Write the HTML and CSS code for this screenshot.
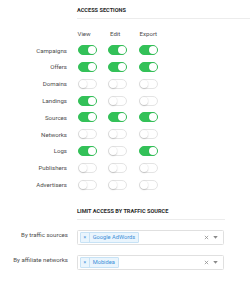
FILE: index.html
```html
<!DOCTYPE html>
<html>
<head>
<meta charset="utf-8">
<link rel="stylesheet" href="styles.css">
</head>
<body>
<div class="page">
  <section class="access">
    <div class="section-head">ACCESS SECTIONS</div>
    <div class="perm-grid">
      <div class="label"></div>
      <div class="col-head">View</div>
      <div class="col-head edit">Edit</div>
      <div class="col-head export">Export</div>

      <div class="label">Campaigns</div>
      <span class="tog on"></span><span class="tog on"></span><span class="tog on"></span>

      <div class="label">Offers</div>
      <span class="tog on"></span><span class="tog on"></span><span class="tog on"></span>

      <div class="label">Domains</div>
      <span class="tog"></span><span class="tog"></span><span class="tog"></span>

      <div class="label">Landings</div>
      <span class="tog on"></span><span class="tog"></span><span class="tog"></span>

      <div class="label">Sources</div>
      <span class="tog on"></span><span class="tog on"></span><span class="tog on"></span>

      <div class="label">Networks</div>
      <span class="tog"></span><span class="tog"></span><span class="tog"></span>

      <div class="label">Logs</div>
      <span class="tog on"></span><span class="tog"></span><span class="tog on"></span>

      <div class="label">Publishers</div>
      <span class="tog"></span><span class="tog"></span><span class="tog"></span>

      <div class="label">Advertisers</div>
      <span class="tog"></span><span class="tog"></span><span class="tog"></span>
    </div>
  </section>

  <section class="limit">
    <div class="section-head short">LIMIT ACCESS BY TRAFFIC SOURCE</div>
    <div class="field">
      <div class="flabel">By traffic sources</div>
      <div class="select">
        <span class="tag"><span class="tag-x">×</span><span class="tag-t">Google AdWords</span></span>
        <svg class="clear" viewBox="0 0 6 6" width="5" height="5"><path d="M1 1L5 5M5 1L1 5" stroke="#8a8a8a" stroke-width="0.9"/></svg>
        <svg class="arrow" viewBox="0 0 6 4" width="5" height="3"><path d="M0 0H6L3 3.5Z" fill="#8a8a8a"/></svg>
      </div>
    </div>
    <div class="field">
      <div class="flabel">By affiliate networks</div>
      <div class="select">
        <span class="tag"><span class="tag-x">×</span><span class="tag-t">Mobidea</span></span>
        <svg class="clear" viewBox="0 0 6 6" width="5" height="5"><path d="M1 1L5 5M5 1L1 5" stroke="#8a8a8a" stroke-width="0.9"/></svg>
        <svg class="arrow" viewBox="0 0 6 4" width="5" height="3"><path d="M0 0H6L3 3.5Z" fill="#8a8a8a"/></svg>
      </div>
    </div>
  </section>
</div>
</body>
</html>
```

FILE: styles.css
```css
* { box-sizing: border-box; }
html, body { margin: 0; padding: 0; background: #fff; }
body {
  font-family: Roboto, "Liberation Sans", Arial, sans-serif;
  font-size: 6.1px;
  color: #4d4d4d;
  width: 250px;
  height: 286px;
  overflow: hidden;
}
.page { padding-top: 7px; }

.section-head {
  margin-left: 77px;
  font-weight: bold;
  font-size: 5.6px;
  color: #2a2a2a;
  height: 12px;
  border-bottom: 1px solid #ececec;
  line-height: 6px;
}
.section-head.short { margin-right: 25px; }

.perm-grid {
  display: grid;
  grid-template-columns: 67px 20px 20px 20px;
  column-gap: 10.5px;
  grid-auto-rows: 16.8px;
  margin-top: 6px;
  align-items: center;
}
.perm-grid > .label { justify-self: end; }
.col-head.edit { padding-left: 2px; }
.col-head.export { padding-left: 1px; }

.tog {
  position: relative;
  display: block;
  width: 19px;
  height: 10px;
  border-radius: 5px;
  background: #fff;
  border: 1px solid #e4e4e4;
}
.tog::after {
  content: "";
  position: absolute;
  top: 0;
  left: 0;
  width: 8px;
  height: 8px;
  border-radius: 50%;
  background: #fff;
  box-shadow: 0 0.5px 1.5px rgba(0,0,0,0.28);
}
.tog.on { background: #33c158; border-color: #33c158; }
.tog.on::after { left: auto; right: 0; box-shadow: 0 0 1px rgba(0,0,0,0.15); }

.limit { margin-top: 15px; }
.limit .section-head { height: 12px; }

.field {
  display: grid;
  grid-template-columns: 68px 147px;
  column-gap: 9px;
  margin-top: 10px;
}
.field + .field { margin-top: 10px; }
.flabel { text-align: right; padding-top: 1.5px; }
.select {
  height: 15px;
  border: 1px solid #e0e0e0;
  border-radius: 1.5px;
  display: flex;
  align-items: center;
  padding: 0 5px 0 2px;
}
.tag {
  display: flex;
  align-items: center;
  height: 11px;
  background: #eaf5fd;
  border: 1px solid #c7e2f5;
  border-radius: 1px;
  color: #3d8fd8;
  font-size: 5.7px;
}
.tag-x {
  padding: 0 2.5px;
  border-right: 1px solid #c7e2f5;
  height: 100%;
  display: flex;
  align-items: center;
  font-size: 5px;
}
.tag-t { padding: 0 3px; }
.clear { margin-left: auto; display: block; }
.arrow { margin-left: 4px; display: block; }
```
